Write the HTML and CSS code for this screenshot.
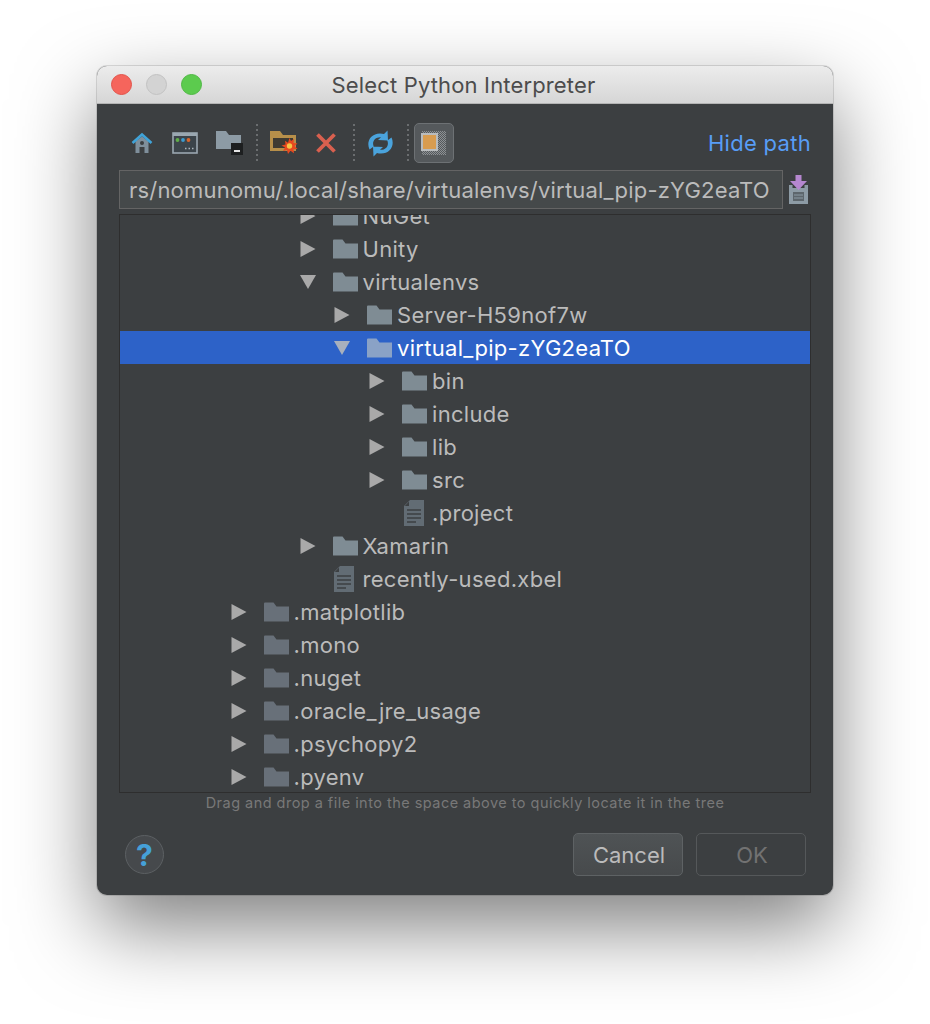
FILE: index.html
```html
<!DOCTYPE html>
<html lang="en">
<head>
<meta charset="utf-8">
<title>Select Python Interpreter</title>
<link rel="stylesheet" href="styles.css">
</head>
<body>
<svg class="defs" width="0" height="0" aria-hidden="true">
  <symbol id="folder" viewBox="0 0 25 20"><path d="M0 1.500A1 1 0 0 1 1 .5h8.500l3 4H25V19.500H0z"/></symbol>
  <symbol id="right" viewBox="0 0 15 16"><path d="M0 0l15 8L0 16z"/></symbol>
  <symbol id="down" viewBox="0 0 16 14"><path d="M0 0h16L8 14z"/></symbol>
  <symbol id="doc" viewBox="0 0 20 26"><path fill="#626c74" d="M6 0h14v26H0V6z"/><path fill="#3c3f41" d="M5 1.500v4.500H.8z"/><path stroke="#3c3f41" stroke-width="1.500" d="M3 10h14M3 14h14M3 18h14M3 22h9"/></symbol>
</svg>
<main class="window">
  <header class="titlebar">
    <div class="lights">
      <span class="light red"></span><span class="light grey"></span><span class="light green"></span>
    </div>
    <h1 class="title">Select Python Interpreter</h1>
  </header>
  <div class="content">
    <div class="toolbar">
      <span class="tool">
        <svg width="22" height="22" viewBox="0 0 22 22"><path fill="#7f8f9b" d="M4.500 9.500 11 4.500l6.500 5V21h-4v-6h-5v6h-4z"/><circle cx="11" cy="11" r="2" fill="#3c3f41"/><path fill="none" stroke="#40a3d8" stroke-width="2.600" d="M1.500 11 11 2.500l9.500 8.500"/></svg>
      </span>
      <span class="tool">
        <svg width="26" height="22" viewBox="0 0 26 22"><rect x="1" y="1" width="24" height="20" fill="#3c444a" stroke="#9aa7b0" stroke-width="1.600"/><path fill="#9aa7b0" d="M1 1h24v3H1z"/><circle cx="5.500" cy="8" r="1.900" fill="#5fad48"/><circle cx="11" cy="8" r="1.900" fill="#3d9ccf"/><circle cx="16.500" cy="8" r="1.900" fill="#d9662c"/><path stroke="#aab4bb" stroke-width="1.500" stroke-dasharray="1.500 2" d="M13 16.500h9"/></svg>
      </span>
      <span class="tool">
        <svg width="30" height="26" viewBox="-2 0 30 26"><path fill="#8d9ba5" d="M0 1h10l3 4h12v14H0z"/><path fill="#1d1f20" d="M15 13h12v12H15z"/><path fill="#e6e6e6" d="M18 20h6v2h-6z"/></svg>
      </span>
      <span class="sep"></span>
      <span class="tool">
        <svg width="30" height="26" viewBox="-2 0 30 26"><path fill="#b78f4a" d="M0 1h10l3 4h13v16H0z"/><path fill="#3f3a32" d="M3 8h20v10H3z"/><path fill="#e8481f" d="M19.500 8l1.500 3 3-2-.5 4 4 .5-3 2.500 3 3-4 .2.500 4-3.500-2.500-2.500 3.300-1-4-4 1 2-3.500-3.500-2 4-1-.5-3.800 3 2z"/><circle cx="19.500" cy="16" r="2.700" fill="#f6c545"/></svg>
      </span>
      <span class="tool">
        <svg width="22" height="22" viewBox="0 0 22 22"><path stroke="#d9604f" stroke-width="3.800" d="M2.500 2.500l17 17M19.500 2.500l-17 17"/></svg>
      </span>
      <span class="sep"></span>
      <span class="tool">
        <svg width="27" height="27" viewBox="0 0 27 27"><path fill="#4aa3dc" d="M2.500 19.500C-1 12 3.500 3.500 13 3.500c1.500 0 2.800.2 4 .6L20.500.5 21 10.500l-10-.5 3-2.800c-5.500-.6-9.500 4-7.300 9.300zM24.500 7.500C28 15 23.500 23.500 14 23.500c-1.500 0-2.800-.2-4-.6l-3.500 3.600L6 16.500l10 .5-3 2.800c5.500.6 9.500-4 7.300-9.300z"/></svg>
      </span>
      <span class="sep"></span>
      <span class="tool tool-on">
        <svg width="26" height="26" viewBox="0 0 26 26"><defs><pattern id="chk" width="2" height="2" patternUnits="userSpaceOnUse"><path fill="#8d9194" d="M0 0h1v1H0zM1 1h1v1H1z"/></pattern></defs><rect x="1" y="1" width="24" height="24" fill="url(#chk)"/><rect x="1" y="4" width="15" height="16" fill="#d89c50" stroke="#b9bcbe" stroke-width="2"/></svg>
      </span>
      <a class="hide-path">Hide path</a>
    </div>
    <div class="path-row">
      <div class="path-field">rs/nomunomu/.local/share/virtualenvs/virtual_pip-zYG2eaTO</div>
      <svg class="paste" width="21" height="29" viewBox="0 0 21 29"><path fill="#8d9ba5" d="M1 10h3.500v3h12v-3H20v19H1z"/><path fill="#5d666c" d="M5 17h11v9H5z"/><path stroke="#8d9ba5" d="M6 20h9M6 23h9"/><path fill="#b587cf" d="M7.500 0h6v6H19l-8.500 9L2 6h5.500z"/></svg>
    </div>
    <div class="tree">
      <div class="tree-inner">
        <div class="row d3"><svg class="arrow"><use href="#right"/></svg><svg class="folder"><use href="#folder"/></svg><span>NuGet</span></div>
        <div class="row d3"><svg class="arrow"><use href="#right"/></svg><svg class="folder"><use href="#folder"/></svg><span>Unity</span></div>
        <div class="row d3"><svg class="arrow"><use href="#down"/></svg><svg class="folder"><use href="#folder"/></svg><span>virtualenvs</span></div>
        <div class="row d4"><svg class="arrow"><use href="#right"/></svg><svg class="folder"><use href="#folder"/></svg><span>Server-H59nof7w</span></div>
        <div class="row d4 selected"><svg class="arrow"><use href="#down"/></svg><svg class="folder"><use href="#folder"/></svg><span>virtual_pip-zYG2eaTO</span></div>
        <div class="row d5"><svg class="arrow"><use href="#right"/></svg><svg class="folder"><use href="#folder"/></svg><span>bin</span></div>
        <div class="row d5"><svg class="arrow"><use href="#right"/></svg><svg class="folder"><use href="#folder"/></svg><span>include</span></div>
        <div class="row d5"><svg class="arrow"><use href="#right"/></svg><svg class="folder"><use href="#folder"/></svg><span>lib</span></div>
        <div class="row d5"><svg class="arrow"><use href="#right"/></svg><svg class="folder"><use href="#folder"/></svg><span>src</span></div>
        <div class="row d5"><span class="arrow"></span><svg class="doc"><use href="#doc"/></svg><span>.project</span></div>
        <div class="row d3"><svg class="arrow"><use href="#right"/></svg><svg class="folder"><use href="#folder"/></svg><span>Xamarin</span></div>
        <div class="row d3"><span class="arrow"></span><svg class="doc"><use href="#doc"/></svg><span>recently-used.xbel</span></div>
        <div class="row d2 hidden"><svg class="arrow"><use href="#right"/></svg><svg class="folder"><use href="#folder"/></svg><span>.matplotlib</span></div>
        <div class="row d2 hidden"><svg class="arrow"><use href="#right"/></svg><svg class="folder"><use href="#folder"/></svg><span>.mono</span></div>
        <div class="row d2 hidden"><svg class="arrow"><use href="#right"/></svg><svg class="folder"><use href="#folder"/></svg><span>.nuget</span></div>
        <div class="row d2 hidden"><svg class="arrow"><use href="#right"/></svg><svg class="folder"><use href="#folder"/></svg><span>.oracle_jre_usage</span></div>
        <div class="row d2 hidden"><svg class="arrow"><use href="#right"/></svg><svg class="folder"><use href="#folder"/></svg><span>.psychopy2</span></div>
        <div class="row d2 hidden"><svg class="arrow"><use href="#right"/></svg><svg class="folder"><use href="#folder"/></svg><span>.pyenv</span></div>
      </div>
    </div>
    <p class="hint">Drag and drop a file into the space above to quickly locate it in the tree</p>
    <div class="footer">
      <span class="help">?</span>
      <div class="buttons">
        <button class="btn btn-cancel">Cancel</button>
        <button class="btn btn-ok" disabled>OK</button>
      </div>
    </div>
  </div>
</main>
</body>
</html>
```

FILE: styles.css
```css
* { box-sizing: border-box; }
html, body { margin: 0; height: 100%; }
body {
  background: #fff;
  padding: 66px 0 0 97px;
  font-family: Inter, "Liberation Sans", sans-serif;
  overflow: hidden;
}
.defs { display: block; height: 0; }
.window {
  width: 736px;
  height: 829px;
  border-radius: 10px;
  background: #3c3f41;
  box-shadow: 0 0 0 1px rgba(0,0,0,.12), 0 32px 80px rgba(0,0,0,.5);
  display: flex;
  flex-direction: column;
}
.titlebar {
  height: 38px;
  flex: none;
  display: flex;
  align-items: center;
  position: relative;
  border-radius: 10px 10px 0 0;
  background: linear-gradient(#ececec, #d6d6d6);
  border-bottom: 1px solid #b4b4b4;
}
.lights { display: flex; gap: 14px; padding-left: 14px; }
.light { width: 21px; height: 21px; border-radius: 50%; }
.red { background: #f5655c; border: 1px solid #e2534a; }
.grey { background: #d3d3d3; border: 1px solid #c2c2c2; }
.green { background: #5ccb4e; border: 1px solid #4fb844; }
.title {
  position: absolute;
  left: 0;
  right: 3px;
  margin: 0;
  text-align: center;
  font-size: 22px;
  font-weight: 400;
  letter-spacing: .15px;
  color: #4c4c4c;
}
.content {
  flex: 1;
  min-height: 0;
  display: flex;
  flex-direction: column;
  padding: 0 22px 0 22px;
  border-radius: 0 0 10px 10px;
}
.toolbar {
  height: 66px;
  flex: none;
  display: flex;
  align-items: center;
  padding-top: 12px;
  padding-left: 1px;
}
.tool {
  width: 43.500px;
  height: 40px;
  flex: none;
  display: flex;
  align-items: center;
  justify-content: center;
}
.sep {
  width: 2px;
  height: 38px;
  flex: none;
  margin: 0 3.500px 0 5px;
  background: repeating-linear-gradient(#6a6d6f 0 2px, transparent 2px 5px);
}
.tool-on {
  width: 40px;
  margin-left: 1px;
  border: 1.500px solid #6d7174;
  border-radius: 5px;
  background: #55595c;
}
.hide-path {
  margin-left: auto;
  font-size: 22px;
  letter-spacing: .3px;
  color: #589df6;
}
.path-row {
  height: 39px;
  flex: none;
  display: flex;
  align-items: center;
  gap: 5px;
}
.path-field {
  width: 664px;
  height: 39px;
  flex: none;
  padding-left: 9px;
  line-height: 39px;
  font-size: 22px;
  letter-spacing: .2px;
  color: #bbb;
  background: #45494a;
  border: 1.500px solid #646464;
  white-space: nowrap;
  overflow: hidden;
}
.paste { flex: none; }
.tree {
  height: 579px;
  flex: none;
  margin-top: 5px;
  border: 1.500px solid #2e2e2e;
  overflow: hidden;
}
.tree-inner { margin-top: -16px; }
.row {
  height: 33px;
  display: flex;
  align-items: center;
  font-size: 22px;
  letter-spacing: .3px;
  color: #bbb;
  white-space: nowrap;
}
.d2 { padding-left: 110.500px; }
.d3 { padding-left: 179.500px; }
.d4 { padding-left: 214px; }
.d5 { padding-left: 249px; }
.arrow {
  width: 16px;
  height: 16px;
  flex: none;
  margin-right: 17px;
  fill: #a9a9a9;
}
.folder {
  width: 25px;
  height: 20px;
  flex: none;
  margin-right: 5px;
  fill: #7f8c94;
}
.doc {
  width: 20px;
  height: 26px;
  flex: none;
  margin: 0 8.500px 0 1.500px;
}
.hidden .folder { fill: #687079; }
.selected { background: #2d62c8; color: #fff; }
.selected .folder { fill: #8aa2c6; }
.selected .arrow { fill: #a8b0bd; }
.hint {
  margin: 0;
  height: 20px;
  line-height: 20px;
  text-align: center;
  font-size: 14.500px;
  letter-spacing: .47px;
  color: #787878;
}
.footer {
  display: flex;
  align-items: center;
  justify-content: space-between;
  margin-top: 20px;
  padding: 0 5px 0 6px;
}
.help {
  width: 39px;
  height: 39px;
  border-radius: 50%;
  border: 1.500px solid #5c6063;
  background: #46494c;
  display: flex;
  align-items: center;
  justify-content: center;
  font-size: 30px;
  font-weight: 700;
  color: #45a0d8;
}
.buttons { display: flex; gap: 13px; }
.btn {
  width: 110px;
  height: 43px;
  padding: 0 0 0 2px;
  border-radius: 5px;
  font: 400 22px Inter, "Liberation Sans", sans-serif;
}
.btn-cancel {
  background: linear-gradient(#4f5355, #474a4c);
  border: 1.500px solid #5e6264;
  color: #bbb;
}
.btn-ok {
  background: transparent;
  border: 1.500px solid #55585a;
  color: #727272;
}
```
